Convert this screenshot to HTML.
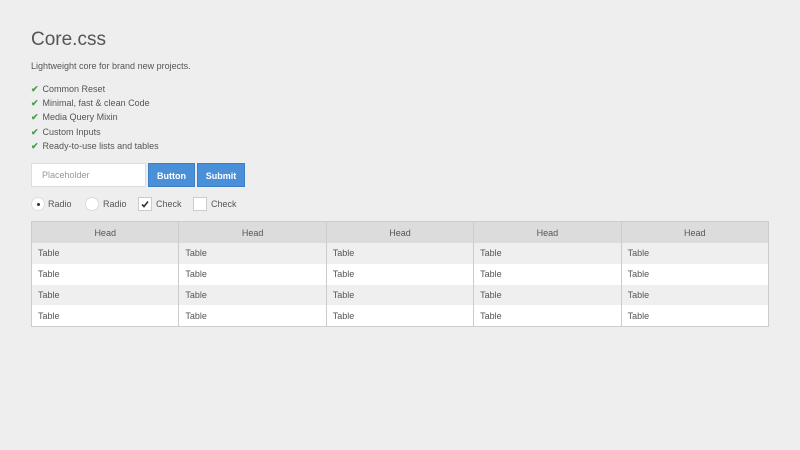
<!DOCTYPE html>
<html><head><style>
body{margin:0;background:#eeeeee;font-family:"Liberation Sans",sans-serif;color:#555;width:800px;height:450px;position:relative;overflow:hidden}
.a{position:absolute}
h1{position:absolute;left:31px;top:29px;margin:0;font-weight:normal;font-size:19px;color:#555}
.p{left:31px;top:61px;font-size:9px}
.li{left:31px;font-size:9px}
.li b{color:#4a9e4a;font-weight:bold;margin-right:4px;font-size:9px}
.inp{left:31px;top:163px;width:115px;height:24px;background:#fff;border:1px solid #ddd;box-sizing:border-box;font-size:9px;color:#999;line-height:22px;padding-left:10px}
.btn{top:163px;height:24px;background:#4a90d9;color:#fff;font-size:9px;font-weight:bold;text-align:center;line-height:24px;border:1px solid #3a7fc8;box-sizing:border-box}
.r{top:197px;width:14px;height:14px;border-radius:50%;background:#fff;border:1px solid #ddd;box-sizing:border-box}
.c{top:197px;width:14px;height:14px;background:#fff;border:1px solid #ccc;box-sizing:border-box}
.l{top:199px;font-size:9px}
table{position:absolute;left:31px;top:221px;width:738px;border-collapse:collapse;border:1px solid #ccc;font-size:9px}
td,th{height:20.75px;border-left:1px solid #ccc;padding:0 0 0 6px;text-align:left;font-weight:normal}
th{background:#dcdcdc;text-align:center;padding:0;height:21px}
tr:nth-child(even) td{background:#efefef}
tr:nth-child(odd) td{background:#fff}
</style></head><body>
<h1>Core.css</h1>
<div class="a p">Lightweight core for brand new projects.</div>
<div class="a li" style="top:84px"><b>✔</b>Common Reset</div>
<div class="a li" style="top:98px"><b>✔</b>Minimal, fast &amp; clean Code</div>
<div class="a li" style="top:112px"><b>✔</b>Media Query Mixin</div>
<div class="a li" style="top:127px"><b>✔</b>Custom Inputs</div>
<div class="a li" style="top:141px"><b>✔</b>Ready-to-use lists and tables</div>
<div class="a inp">Placeholder</div>
<div class="a btn" style="left:148px;width:47px">Button</div>
<div class="a btn" style="left:197px;width:48px">Submit</div>
<div class="a r" style="left:31px"><div class="a" style="left:5px;top:5px;width:3px;height:3px;border-radius:50%;background:#333"></div></div>
<div class="a l" style="left:48px">Radio</div>
<div class="a r" style="left:85px"></div>
<div class="a l" style="left:103px">Radio</div>
<div class="a c" style="left:138px"><svg width="12" height="12" style="position:absolute;left:0;top:0"><path d="M3 6.5L5 8.5L9 3.5" stroke="#333" stroke-width="1.6" fill="none"/></svg></div>
<div class="a l" style="left:156px">Check</div>
<div class="a c" style="left:193px"></div>
<div class="a l" style="left:211px">Check</div>
<table>
<tr><th>Head</th><th>Head</th><th>Head</th><th>Head</th><th>Head</th></tr>
<tr><td>Table</td><td>Table</td><td>Table</td><td>Table</td><td>Table</td></tr>
<tr><td>Table</td><td>Table</td><td>Table</td><td>Table</td><td>Table</td></tr>
<tr><td>Table</td><td>Table</td><td>Table</td><td>Table</td><td>Table</td></tr>
<tr><td>Table</td><td>Table</td><td>Table</td><td>Table</td><td>Table</td></tr>
</table>
</body></html>
